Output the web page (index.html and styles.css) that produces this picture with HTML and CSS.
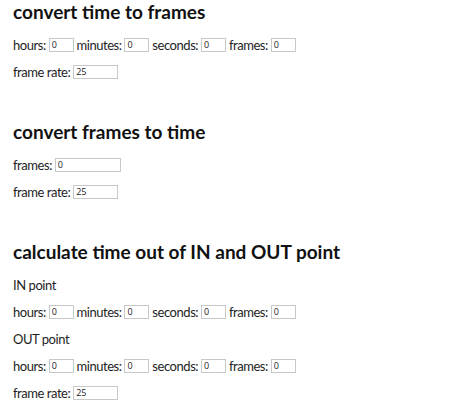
FILE: index.html
```html
<!DOCTYPE html>
<html>
<head>
<meta charset="utf-8">
<link rel="stylesheet" href="styles.css">
</head>
<body>
<section class="block">
  <h1 class="title">convert time to frames</h1>
  <div class="row">hours: <input class="num" value="0"> minutes: <input class="num" value="0"> seconds: <input class="num" value="0"> frames: <input class="num" value="0"></div>
  <div class="row">frame rate: <input class="rate" value="25"></div>
</section>
<section class="block">
  <h1 class="title">convert frames to time</h1>
  <div class="row">frames: <input class="wide" value="0"></div>
  <div class="row">frame rate: <input class="rate" value="25"></div>
</section>
<section class="block">
  <h1 class="title">calculate time out of IN and OUT point</h1>
  <div class="row">IN point</div>
  <div class="row">hours: <input class="num" value="0"> minutes: <input class="num" value="0"> seconds: <input class="num" value="0"> frames: <input class="num" value="0"></div>
  <div class="row">OUT point</div>
  <div class="row">hours: <input class="num" value="0"> minutes: <input class="num" value="0"> seconds: <input class="num" value="0"> frames: <input class="num" value="0"></div>
  <div class="row">frame rate: <input class="rate" value="25"></div>
</section>
</body>
</html>
```
FILE: styles.css
```css
body {
  margin: 0;
  padding: 0 13px;
  font-family: "Lato", "Open Sans", sans-serif;
  font-size: 13px;
  letter-spacing: -0.45px;
  color: #1e1e1e;
  background: #fff;
}
.block {
  margin-bottom: 35px;
}
.title {
  margin: 0 0 7px;
  font-size: 19px;
  line-height: 24px;
  font-weight: 700;
  letter-spacing: 0;
  color: #111;
}
.row {
  height: 27px;
  display: flex;
  align-items: center;
  white-space: pre;
}
input {
  box-sizing: border-box;
  height: 14px;
  border: 1px solid #c8c8c8;
  padding: 0 2px;
  margin: 0;
  font-family: "Open Sans", sans-serif;
  font-size: 9px;
  letter-spacing: 0;
  color: #222;
}
.num { width: 25px; }
.rate { width: 45px; }
.wide { width: 66px; }
```
